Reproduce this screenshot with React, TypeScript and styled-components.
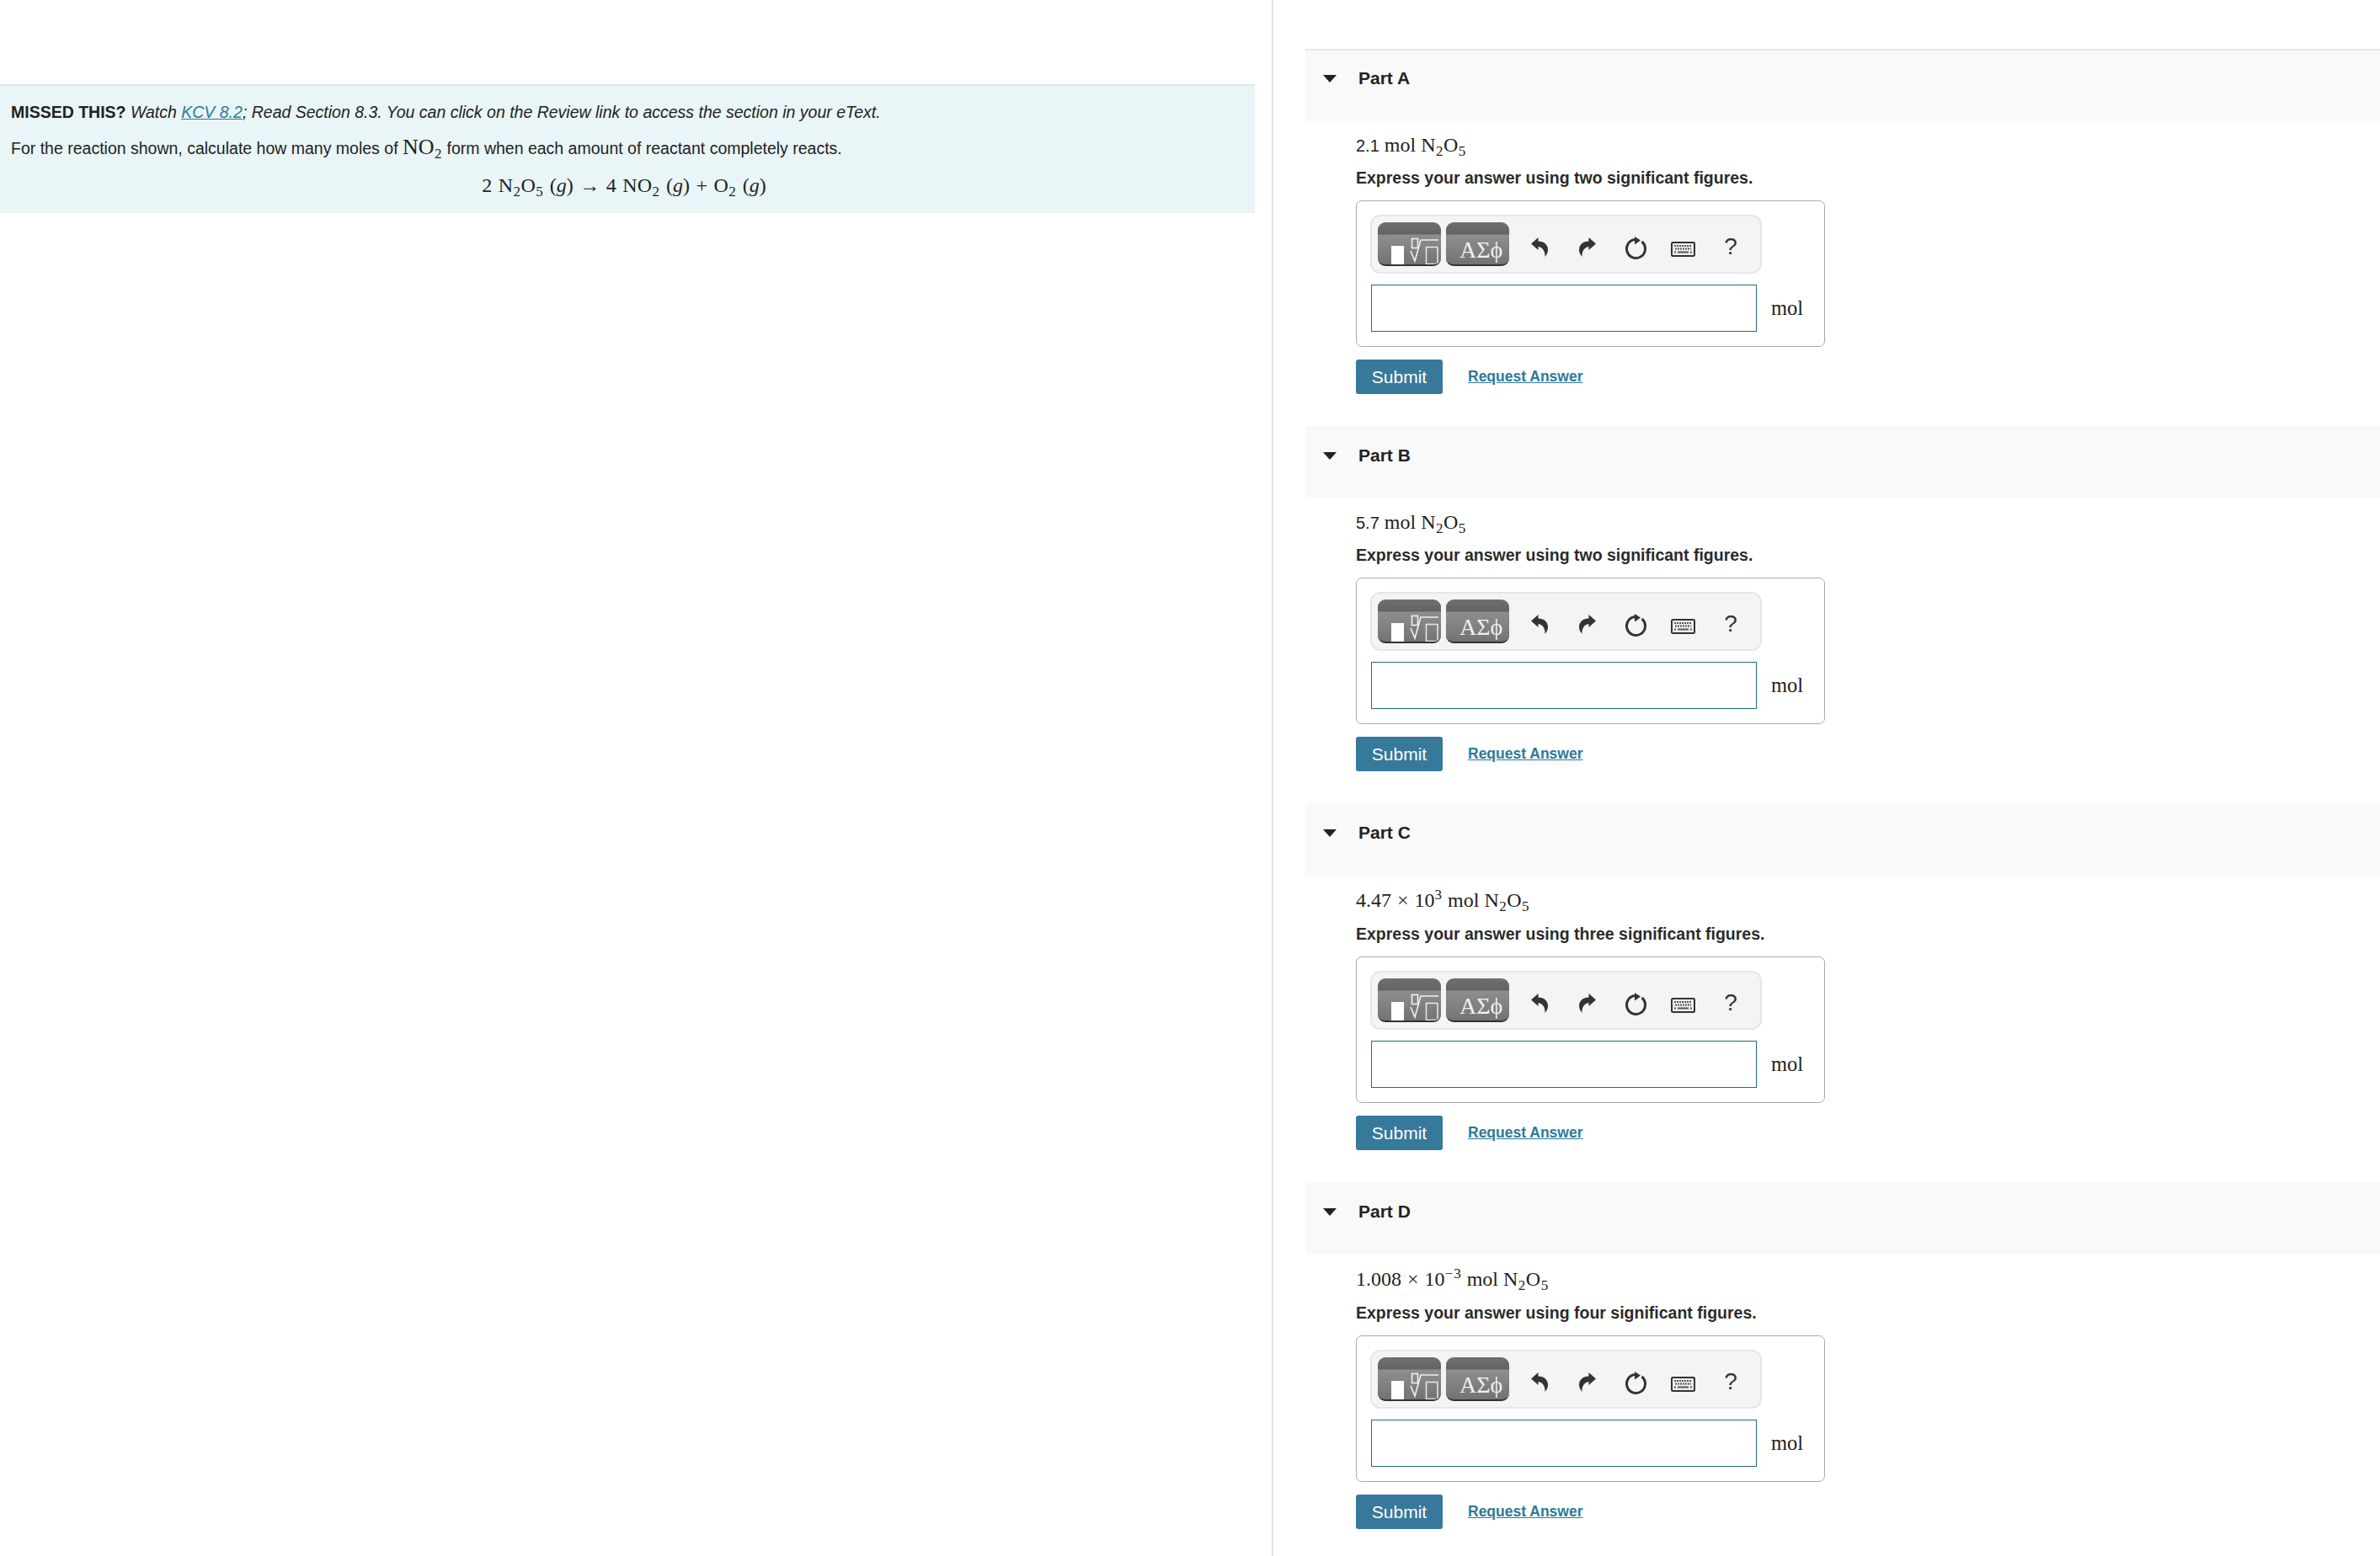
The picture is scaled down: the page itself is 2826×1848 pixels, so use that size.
import React from "react";
import styled, { createGlobalStyle } from "styled-components";

const Global = createGlobalStyle`
  html, body { margin: 0; padding: 0; background: #fff; }
  body { font-family: "Liberation Sans", Arial, sans-serif; color: #222; }
`;
const Page = styled.div`
  display: flex;
  width: 2826px;
  height: 1848px;
  overflow: hidden;
`;
const LeftPane = styled.div`
  width: 1510px;
  flex: none;
  border-right: 2px solid #e4e4e4;
  padding-top: 100px;
`;
const Banner = styled.div`
  width: 1490px;
  height: 153px;
  box-sizing: border-box;
  background: #e9f5f7;
  border-top: 2px solid #dfe5e6;
  padding: 20px 13px 0;
  font-size: 19.5px;
  color: #222;
`;
const BannerLine = styled.div`
  height: 42px;
  line-height: 22px;
`;
const Emph = styled.em`
  font-style: italic;
`;
const BannerLink = styled.a`
  color: #2b7a99;
  text-decoration: underline;
`;
const Equation = styled.div`
  font-family: "Liberation Serif", serif;
  font-size: 24px;
  line-height: 30px;
  text-align: center;
  margin-top: -1px;
  padding-right: 8px;
  word-spacing: 1.5px;
`;
const Formula = styled.span`
  font-family: "Liberation Serif", serif;
  font-size: 26px;
`;
const RightPane = styled.div`
  flex: 1;
  padding: 58px 0 0 38px;
`;
const Part = styled.section<{ $height: number }>`
  height: ${(p) => p.$height}px;
`;
const PartHeader = styled.div<{ $first?: boolean }>`
  display: flex;
  align-items: flex-start;
  height: 86px;
  box-sizing: border-box;
  background: #f9f9f9;
  border-top: 2px solid ${(p) => (p.$first ? "#e8e8e8" : "#f9f9f9")};
  padding: 21px 0 0 21px;
  font-weight: 700;
  font-size: 21px;
  line-height: 24px;
`;
const Caret = styled.span`
  width: 0;
  height: 0;
  margin: 8px 26px 0 0;
  border-left: 8px solid transparent;
  border-right: 8px solid transparent;
  border-top: 9px solid #222;
`;
const PartBody = styled.div`
  padding-left: 60px;
`;
const Amount = styled.div<{ $tall?: boolean }>`
  font-family: "Liberation Serif", serif;
  font-size: 24px;
  line-height: 32px;
  margin-top: ${(p) => (p.$tall ? 13 : 12)}px;
  height: ${(p) => (p.$tall ? 33 : 32)}px;
  white-space: nowrap;
`;
const SansNum = styled.span`
  font-family: "Liberation Sans", sans-serif;
  font-size: 20px;
`;
const TimesSign = styled.span`
  margin: 0 1px;
`;
const Hint = styled.div`
  font-weight: 700;
  font-size: 19.5px;
  line-height: 24px;
  margin-top: 11px;
  color: #2b2b2b;
`;
const AnswerBox = styled.div`
  width: 557px;
  height: 174px;
  box-sizing: border-box;
  margin-top: 15px;
  border: 1px solid #aaa;
  border-radius: 7px;
  padding: 16px 0 0 16px;
`;
const Toolbar = styled.div`
  display: flex;
  align-items: center;
  width: 465px;
  height: 70px;
  box-sizing: border-box;
  background: #f4f4f4;
  border: 2px solid #e6e6e6;
  border-radius: 12px;
  padding: 0 0 0 7px;
`;
const TemplateButton = styled.div`
  position: relative;
  width: 75px;
  height: 52px;
  box-sizing: border-box;
  margin-right: 6px;
  border-radius: 9px;
  overflow: hidden;
  border-bottom: 2px solid #333;
  background: linear-gradient(#707070, #636363 14px, #8e8e8e 15px, #737373 100%);
`;
const GreekLabel = styled.span`
  position: absolute;
  left: 16px;
  top: 17px;
  font-family: "Liberation Serif", serif;
  font-size: 28px;
  line-height: 32px;
  color: #f0f0f0;
  white-space: nowrap;
`;
const ButtonGlyph = styled.svg`
  position: absolute;
  left: 0;
  top: 0;
`;
const ToolIcon = styled.div<{ $w: number; $drop: number }>`
  display: flex;
  justify-content: center;
  align-items: center;
  width: ${(p) => p.$w}px;
  padding-top: ${(p) => p.$drop}px;
`;
const Question = styled.span`
  font-size: 28px;
  line-height: 30px;
  color: #333;
`;
const InputRow = styled.div`
  display: flex;
  align-items: center;
  margin-top: 13px;
  margin-left: 1px;
`;
const Field = styled.div`
  width: 458px;
  height: 56px;
  box-sizing: border-box;
  border: 1px solid #236a84;
  background: #fff;
`;
const Unit = styled.span`
  font-family: "Liberation Serif", serif;
  font-size: 24.5px;
  margin-left: 17px;
`;
const Actions = styled.div`
  display: flex;
  align-items: center;
  margin-top: 15px;
`;
const SubmitButton = styled.div`
  display: flex;
  align-items: center;
  justify-content: center;
  width: 103px;
  height: 41px;
  background: #37799b;
  color: #fff;
  border-radius: 3px;
  font-size: 21px;
`;
const RequestLink = styled.a`
  margin-left: 30px;
  color: #2b7a99;
  font-weight: 700;
  font-size: 17.5px;
  text-decoration: underline;
`;
const Sub = styled.sub`
  font-size: 17px;
  line-height: 0;
  vertical-align: -0.3em;
  padding: 0 0.5px;
`;
const Sup = styled.sup`
  font-size: 17px;
  line-height: 0;
  vertical-align: 0.55em;
  letter-spacing: 1px;
`;

const N2O5 = () => (
  <>
    N<Sub>2</Sub>O<Sub>5</Sub>
  </>
);

const UndoIcon = ({ flip }: { flip?: boolean }) => (
  <svg width="20" height="23" viewBox="0 0 20 23" style={flip ? { transform: "scaleX(-1)" } : undefined}>
    <path d="M0 7.5 L8.5 0 V4.5 C15 4.5 20 8.5 20 14.5 C20 18 18.5 20.5 16.5 23 C17 17 14 11.5 8.5 11 V15 Z" fill="#333" />
  </svg>
);
const RefreshIcon = () => (
  <svg width="26" height="28" viewBox="0 0 26 28">
    <path d="M19.5 6 A11 11 0 1 1 11 3.6" fill="none" stroke="#333" strokeWidth="3" />
    <path d="M11 0 L18 4.5 L11 9.5 Z" fill="#333" />
  </svg>
);
const KeyboardIcon = () => (
  <svg width="29" height="18" viewBox="0 0 29 18">
    <rect x="1" y="1" width="27" height="16" rx="1.5" fill="#eee" stroke="#333" strokeWidth="2" />
    <path d="M4 5h21M5 8.5h19" stroke="#555" strokeWidth="2" strokeDasharray="2 1" fill="none" />
    <path d="M4 12.5h2M8 12.5h13M23 12.5h2" stroke="#555" strokeWidth="2" />
  </svg>
);

const PartBlock = ({
  label,
  height,
  amount,
  hint,
  first,
  tall,
}: {
  label: string;
  height: number;
  amount: React.ReactNode;
  hint: string;
  first?: boolean;
  tall?: boolean;
}) => (
  <Part $height={height}>
    <PartHeader $first={first}>
      <Caret />
      {label}
    </PartHeader>
    <PartBody>
      <Amount $tall={tall}>{amount}</Amount>
      <Hint>{hint}</Hint>
      <AnswerBox>
        <Toolbar>
          <TemplateButton>
            <ButtonGlyph width="75" height="52" viewBox="0 0 75 52">
              <rect x="16" y="28" width="15" height="24" fill="#fff" />
              <rect x="40.5" y="19.5" width="7" height="11" fill="none" stroke="#f0f0f0" strokeWidth="1.6" />
              <path d="M39 34 L44 46 L51 21 H72" fill="none" stroke="#f0f0f0" strokeWidth="1.6" />
              <rect x="57.5" y="29.5" width="13.5" height="20" fill="none" stroke="#e4e4e4" strokeWidth="1.6" />
            </ButtonGlyph>
          </TemplateButton>
          <TemplateButton>
            <GreekLabel>ΑΣϕ</GreekLabel>
          </TemplateButton>
          <ToolIcon $w={60} $drop={6}><UndoIcon /></ToolIcon>
          <ToolIcon $w={54} $drop={6}><UndoIcon flip /></ToolIcon>
          <ToolIcon $w={61} $drop={9}><RefreshIcon /></ToolIcon>
          <ToolIcon $w={50} $drop={11}><KeyboardIcon /></ToolIcon>
          <ToolIcon $w={64} $drop={6}><Question>?</Question></ToolIcon>
        </Toolbar>
        <InputRow>
          <Field />
          <Unit>mol</Unit>
        </InputRow>
      </AnswerBox>
      <Actions>
        <SubmitButton>Submit</SubmitButton>
        <RequestLink>Request Answer</RequestLink>
      </Actions>
    </PartBody>
  </Part>
);

export default function App() {
  return (
    <Page>
      <Global />
      <LeftPane>
        <Banner>
          <BannerLine>
            <strong>MISSED THIS?</strong>{" "}
            <Emph>
              Watch <BannerLink>KCV 8.2</BannerLink>; Read Section 8.3. You can click on the Review link to access the section in your eText.
            </Emph>
          </BannerLine>
          <BannerLine>
            For the reaction shown, calculate how many moles of <Formula>NO<Sub>2</Sub></Formula> form when each amount of reactant completely reacts.
          </BannerLine>
          <Equation>
            2 N<Sub>2</Sub>O<Sub>5</Sub> (<i>g</i>) → 4 NO<Sub>2</Sub> (<i>g</i>) + O<Sub>2</Sub> (<i>g</i>)
          </Equation>
        </Banner>
      </LeftPane>
      <RightPane>
        <PartBlock first label="Part A" height={448} hint="Express your answer using two significant figures." amount={<><SansNum>2.1</SansNum> mol <N2O5 /></>} />
        <PartBlock label="Part B" height={448} hint="Express your answer using two significant figures." amount={<><SansNum>5.7</SansNum> mol <N2O5 /></>} />
        <PartBlock tall label="Part C" height={450} hint="Express your answer using three significant figures." amount={<>4.47 <TimesSign>×</TimesSign> 10<Sup>3</Sup> mol <N2O5 /></>} />
        <PartBlock tall label="Part D" height={450} hint="Express your answer using four significant figures." amount={<>1.008 <TimesSign>×</TimesSign> 10<Sup>−3</Sup> mol <N2O5 /></>} />
      </RightPane>
    </Page>
  );
}
